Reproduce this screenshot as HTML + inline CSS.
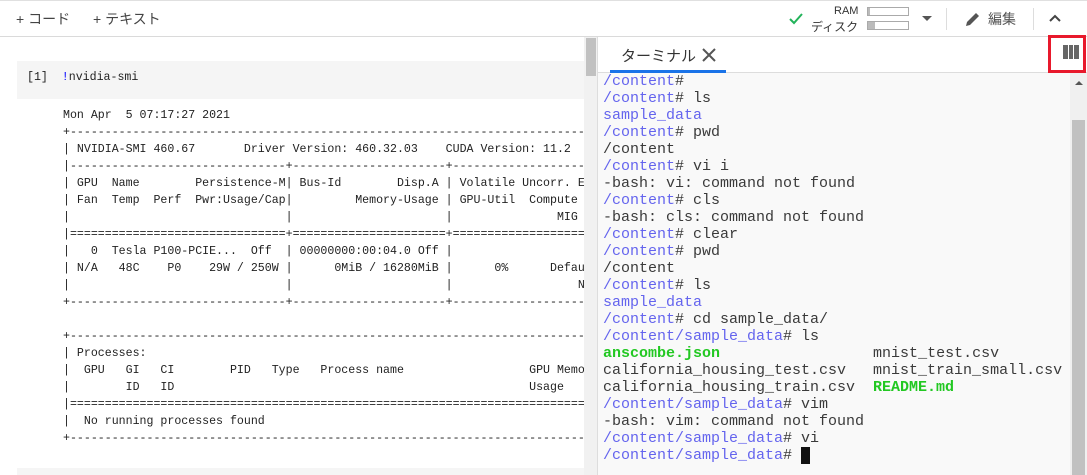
<!DOCTYPE html>
<html><head><meta charset="utf-8"><style>
*{margin:0;padding:0;box-sizing:border-box}
body{width:1087px;height:475px;overflow:hidden;background:#fff;font-family:"Liberation Sans","Noto Sans CJK JP",sans-serif;position:relative}
.top{position:absolute;left:0;top:0;width:1087px;height:37px;border-bottom:1px solid #dadada;border-top:1px solid #e0e0e0}
.abs{position:absolute;white-space:pre}
.out{position:absolute;left:63px;top:107px;font-family:"Liberation Mono","Noto Sans CJK JP",monospace;font-size:11.6px;line-height:17px;color:#222;white-space:pre;width:521px;overflow:hidden}
.term{position:absolute;left:597px;top:73px;width:490px;height:402px;background:#f9f9f9;border-left:1px solid #ddd}
.tt{position:absolute;left:5px;top:0;font-family:"Liberation Mono",monospace;font-size:15px;line-height:17px;color:#3a3a3a;white-space:pre}
.b{color:#6464ee}.g{color:#22c822;font-weight:bold}
</style></head><body>
<div class="top">
 <div class="abs" style="left:16px;top:8px;font-size:14px;color:#444">+ コード</div>
 <div class="abs" style="left:93px;top:8px;font-size:14px;color:#444">+ テキスト</div>
 <svg class="abs" style="left:788px;top:11px" width="16" height="14"><path d="M2 7l4 4 8-9" stroke="#22b35a" stroke-width="2" fill="none"/></svg>
 <div class="abs" style="left:834px;top:4px;font-size:11px;color:#333">RAM</div>
 <div class="abs" style="left:811px;top:17px;font-size:12px;color:#333">ディスク</div>
 <div class="abs" style="left:867px;top:6px;width:42px;height:9px;border:1px solid #aaa;background:#fff"><div style="width:2px;height:7px;background:#bbb"></div></div>
 <div class="abs" style="left:867px;top:20px;width:42px;height:9px;border:1px solid #aaa;background:#fff"><div style="width:7px;height:7px;background:#bbb"></div></div>
 <div class="abs" style="left:922px;top:15px;width:0;height:0;border-left:5px solid transparent;border-right:5px solid transparent;border-top:5px solid #555"></div>
 <div class="abs" style="left:946px;top:7px;width:1px;height:22px;background:#ddd"></div>
 <svg class="abs" style="left:965px;top:10px" width="16" height="16"><path d="M1 15l1-4 9-9 3 3-9 9z" fill="#555"/></svg>
 <div class="abs" style="left:988px;top:8px;font-size:14px;color:#555">編集</div>
 <div class="abs" style="left:1033px;top:7px;width:1px;height:22px;background:#ddd"></div>
 <svg class="abs" style="left:1048px;top:12px" width="14" height="10"><path d="M2 8l5-5 5 5" stroke="#444" stroke-width="2" fill="none"/></svg>
</div>
<div class="abs" style="left:17px;top:61px;width:567px;height:38px;background:#f5f5f5"></div>
<div class="abs" style="left:27px;top:71px;font-family:'Liberation Mono',monospace;font-size:11.6px;color:#222">[1]  <span style="color:#00f">!</span>nvidia-smi</div>
<div class="out">Mon Apr  5 07:17:27 2021
+-----------------------------------------------------------------------------+
| NVIDIA-SMI 460.67       Driver Version: 460.32.03    CUDA Version: 11.2     |
|-------------------------------+----------------------+----------------------+
| GPU  Name        Persistence-M| Bus-Id        Disp.A | Volatile Uncorr. ECC |
| Fan  Temp  Perf  Pwr:Usage/Cap|         Memory-Usage | GPU-Util  Compute M. |
|                               |                      |               MIG M. |
|===============================+======================+======================|
|   0  Tesla P100-PCIE...  Off  | 00000000:00:04.0 Off |                    0 |
| N/A   48C    P0    29W / 250W |      0MiB / 16280MiB |      0%      Default |
|                               |                      |                  N/A |
+-------------------------------+----------------------+----------------------+

+-----------------------------------------------------------------------------+
| Processes:                                                                  |
|  GPU   GI   CI        PID   Type   Process name                  GPU Memory |
|        ID   ID                                                   Usage      |
|=============================================================================|
|  No running processes found                                                 |
+-----------------------------------------------------------------------------+</div>
<div class="abs" style="left:17px;top:468px;width:567px;height:7px;background:#f5f5f5"></div>
<div class="abs" style="left:584px;top:37px;width:13px;height:438px;background:#f1f1f1"></div>
<div class="abs" style="left:586px;top:38px;width:10px;height:38px;background:#c1c1c1"></div>
<div class="abs" style="left:597px;top:37px;width:490px;height:36px;background:#fff;border-left:1px solid #ddd;border-bottom:1px solid #ddd"></div>
<div class="abs" style="left:621px;top:45px;font-size:15px;color:#333">ターミナル</div>
<svg class="abs" style="left:702px;top:48px" width="14" height="14"><path d="M1 1l12 12M13 1L1 13" stroke="#555" stroke-width="2"/></svg>
<div class="abs" style="left:610px;top:70px;width:116px;height:3px;background:#1a73e8"></div>
<div class="abs" style="left:1048px;top:35px;width:38px;height:38px;border:3px solid #e8192c;background:#fff"></div>
<div class="abs" style="left:1063px;top:45px;width:16px;height:14px;background:#666"></div>
<div class="abs" style="left:1068px;top:45px;width:1px;height:14px;background:#fff"></div>
<div class="abs" style="left:1073px;top:45px;width:1px;height:14px;background:#fff"></div>
<div class="term">
<div class="tt"><span class="b">/content</span>#
<span class="b">/content</span># ls
<span class="b">sample_data</span>
<span class="b">/content</span># pwd
/content
<span class="b">/content</span># vi i
-bash: vi: command not found
<span class="b">/content</span># cls
-bash: cls: command not found
<span class="b">/content</span># clear
<span class="b">/content</span># pwd
/content
<span class="b">/content</span># ls
<span class="b">sample_data</span>
<span class="b">/content</span># cd sample_data/
<span class="b">/content/sample_data</span># ls
<span class="g">anscombe.json</span>                 mnist_test.csv
california_housing_test.csv   mnist_train_small.csv
california_housing_train.csv  <span class="g">README.md</span>
<span class="b">/content/sample_data</span># vim
-bash: vim: command not found
<span class="b">/content/sample_data</span># vi
<span class="b">/content/sample_data</span># <span style="background:#111">&nbsp;</span></div>
<div class="abs" style="left:472px;top:0;width:17px;height:402px;background:#f0f0f0"></div>
<div class="abs" style="left:477px;top:8px;width:0;height:0;border-left:4px solid transparent;border-right:4px solid transparent;border-bottom:4px solid #555"></div>
<div class="abs" style="left:474px;top:47px;width:13px;height:355px;background:#c1c1c1"></div>
</div>
</body></html>
